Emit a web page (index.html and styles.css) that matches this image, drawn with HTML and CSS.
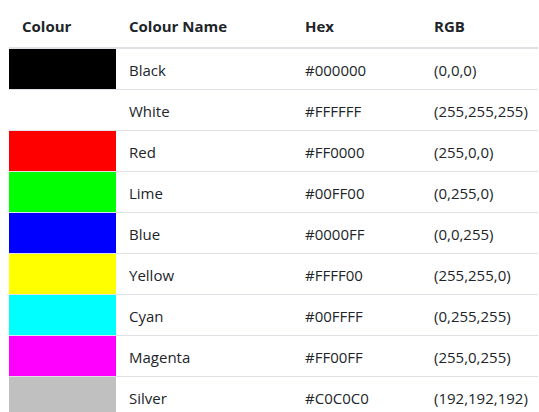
FILE: index.html
```html
<!DOCTYPE html>
<html>
<head>
<meta charset="utf-8">
<link rel="stylesheet" href="styles.css">
</head>
<body>
<table class="colours">
  <thead>
    <tr>
      <th class="c1">Colour</th>
      <th class="c2">Colour Name</th>
      <th class="c3">Hex</th>
      <th class="c4">RGB</th>
    </tr>
  </thead>
  <tbody>
    <tr><td class="swatch" style="background:#000000"></td><td>Black</td><td>#000000</td><td>(0,0,0)</td></tr>
    <tr><td class="swatch" style="background:#FFFFFF"></td><td>White</td><td>#FFFFFF</td><td>(255,255,255)</td></tr>
    <tr><td class="swatch" style="background:#FF0000"></td><td>Red</td><td>#FF0000</td><td>(255,0,0)</td></tr>
    <tr><td class="swatch" style="background:#00FF00"></td><td>Lime</td><td>#00FF00</td><td>(0,255,0)</td></tr>
    <tr><td class="swatch" style="background:#0000FF"></td><td>Blue</td><td>#0000FF</td><td>(0,0,255)</td></tr>
    <tr><td class="swatch" style="background:#FFFF00"></td><td>Yellow</td><td>#FFFF00</td><td>(255,255,0)</td></tr>
    <tr><td class="swatch" style="background:#00FFFF"></td><td>Cyan</td><td>#00FFFF</td><td>(0,255,255)</td></tr>
    <tr><td class="swatch" style="background:#FF00FF"></td><td>Magenta</td><td>#FF00FF</td><td>(255,0,255)</td></tr>
    <tr><td class="swatch" style="background:#C0C0C0"></td><td>Silver</td><td>#C0C0C0</td><td>(192,192,192)</td></tr>
  </tbody>
</table>
</body>
</html>
```
FILE: styles.css
```css
html, body {
  margin: 0;
  padding: 0;
  background: #fff;
}
body {
  padding-left: 9px;
  font-family: "Open Sans", "Noto Sans", sans-serif;
  font-size: 15px;
  color: #212529;
}
.colours {
  border-collapse: collapse;
  width: 529px;
  table-layout: fixed;
}
.colours th {
  text-align: left;
  font-weight: 700;
  vertical-align: bottom;
  height: 48px;
  box-sizing: border-box;
  padding: 0 13px 10px 13px;
  line-height: 22px;
  border-bottom: 2px solid #dee2e6;
}
.colours td {
  height: 39px;
  padding: 1px 13px 0 13px;
  line-height: 22px;
  vertical-align: middle;
  border-bottom: 1px solid #dee2e6;
  white-space: nowrap;
}
.colours td.swatch {
  padding: 0;
  height: 40px;
}
.c1 { width: 107px; }
.c2 { width: 176px; }
.c3 { width: 129px; }
.c4 { width: 117px; }
```
